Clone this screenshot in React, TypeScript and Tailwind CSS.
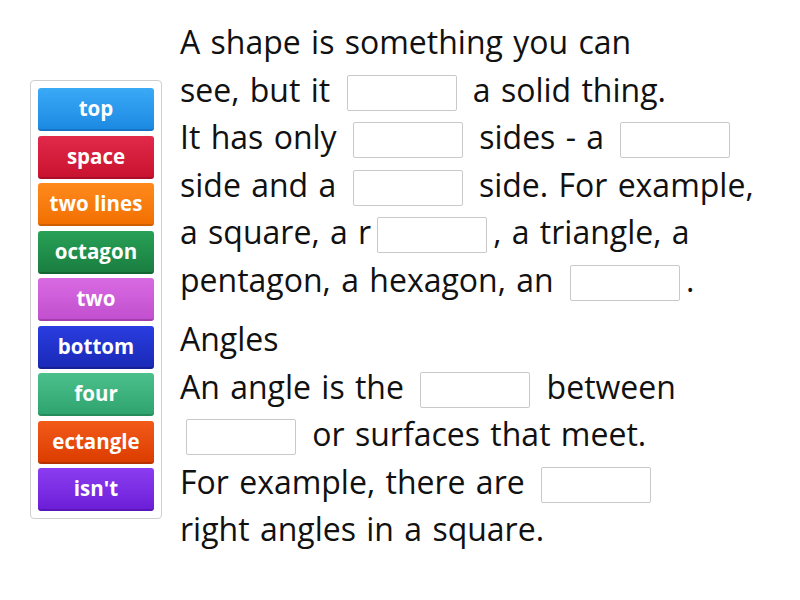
import React from 'react';

type Tile = { label: string; cls: string };

const tiles: Tile[] = [
  { label: 'top', cls: 'from-[#3aa9f6] to-[#1c8ae2] border-[#1672c2]' },
  { label: 'space', cls: 'from-[#e2294a] to-[#c8122f] border-[#a80e27]' },
  { label: 'two lines', cls: 'from-[#ff8a1c] to-[#f26f00] border-[#d05e00]' },
  { label: 'octagon', cls: 'from-[#28a157] to-[#1a7e40] border-[#136632]' },
  { label: 'two', cls: 'from-[#d86ae2] to-[#c24fcf] border-[#a33ead]' },
  { label: 'bottom', cls: 'from-[#2a3de0] to-[#1a29b8] border-[#141f96]' },
  { label: 'four', cls: 'from-[#4cc08c] to-[#2fa46f] border-[#258a5c]' },
  { label: 'ectangle', cls: 'from-[#f25a18] to-[#dc3c00] border-[#b83200]' },
  { label: "isn't", cls: 'from-[#8c3cf0] to-[#6c1ed8] border-[#5815b8]' },
];

const Blank = () => (
  <span className="inline-block w-[110px] h-[36px] mx-[6px] align-middle border border-[#c9c9c9] rounded-[2px] bg-white" />
);

export default function App() {
  return (
    <div
      className="w-[800px] h-[600px] bg-white flex items-start"
      style={{ fontFamily: '"Open Sans", "Noto Sans", sans-serif' }}
    >
      {/* Word bank */}
      <div className="ml-[30px] mt-[80px] w-[132px] border border-[#cfcfcf] rounded-[4px] px-[7px] pt-[7px] pb-[7px] flex flex-col gap-[4.5px]">
        {tiles.map((t) => (
          <div
            key={t.label}
            className={
              'h-[43px] rounded-[3px] bg-gradient-to-b border-b-2 flex items-center justify-center text-white font-bold text-[20.5px] leading-none ' +
              t.cls
            }
          >
            {t.label}
          </div>
        ))}
      </div>

      {/* Text */}
      <div className="ml-[18px] mt-[18px] text-[32px] leading-[47.5px] text-[#111] [word-spacing:2px]">
        <p className="whitespace-nowrap">
          A shape is something you can
          <br />
          see, but it <Blank /> a solid thing.
          <br />
          It has only <Blank /> sides - a <Blank />
          <br />
          side and a <Blank /> side. For example,
          <br />
          a square, a r<Blank />, a triangle, a
          <br />
          pentagon, a hexagon, an <Blank />.
        </p>
        <p className="whitespace-nowrap mt-[12px]">
          Angles
          <br />
          An angle is the <Blank /> between
          <br />
          <Blank /> or surfaces that meet.
          <br />
          For example, there are <Blank />
          <br />
          right angles in a square.
        </p>
      </div>
    </div>
  );
}
